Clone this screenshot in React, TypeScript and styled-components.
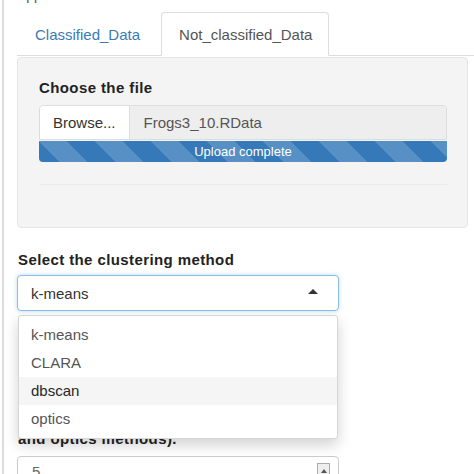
import React from "react";
import styled, { createGlobalStyle } from "styled-components";

const GlobalStyle = createGlobalStyle`
  html, body {
    margin: 0;
    padding: 0;
    background: #fff;
    font-family: "Liberation Sans", Arial, sans-serif;
    color: #333;
    overflow: hidden;
  }
`;

const methods = ["k-means", "CLARA", "dbscan", "optics"];

function App() {
  return (
    <Page>
      <GlobalStyle />
      <TopText>Application</TopText>
      <TabNav>
        <Tab>Classified_Data</Tab>
        <Tab active>Not_classified_Data</Tab>
      </TabNav>
      <Well>
        <Label>Choose the file</Label>
        <InputGroup>
          <BrowseButton>Browse...</BrowseButton>
          <FileName>Frogs3_10.RData</FileName>
        </InputGroup>
        <Progress>Upload complete</Progress>
        <Divider />
      </Well>
      <FormGroup>
        <Label>Select the clustering method</Label>
        <SelectWrap>
          <SelectBox>
            <span>k-means</span>
            <Caret />
          </SelectBox>
          <Dropdown>
            {methods.map((m) => (
              <Option key={m} active={m === "dbscan"}>
                {m}
              </Option>
            ))}
          </Dropdown>
        </SelectWrap>
      </FormGroup>
      <FormGroup spaced>
        <Label>
          Choose the eps parameter (for dbscan
          <br />
          and optics methods).
        </Label>
        <NumberBox>
          <span>5</span>
          <Spinner>
            <SpinUp />
          </Spinner>
        </NumberBox>
      </FormGroup>
    </Page>
  );
}

export default App;

const Page = styled.div`
  position: relative;
  width: 474px;
  height: 474px;
  overflow: hidden;
  box-sizing: border-box;
  margin-left: 2px;
  border-left: 2px solid #dcdcdc;
  padding-left: 13px;
`;

const TopText = styled.div`
  font-size: 14px;
  line-height: 16px;
  margin-top: -13px;
  height: 16px;
  color: #555;
`;

const TabNav = styled.div`
  display: flex;
  gap: 4px;
  margin-top: 9px;
  height: 43px;
  border-bottom: 1px solid #ddd;
  margin-right: -10px;
`;

const Tab = styled.div<{ active?: boolean }>`
  display: flex;
  align-items: center;
  padding: 0 16px 0 17px;
  font-size: 15px;
  color: ${(p) => (p.active ? "#555" : "#3b7bb4")};
  background: ${(p) => (p.active ? "#fff" : "transparent")};
  border: 1px solid ${(p) => (p.active ? "#ddd" : "transparent")};
  border-bottom-color: ${(p) => (p.active ? "#fff" : "transparent")};
  border-radius: 4px 4px 0 0;
  margin-bottom: -1px;
`;

const Well = styled.div`
  margin-top: 1px;
  width: 451px;
  box-sizing: border-box;
  height: 171px;
  background: #f4f4f4;
  border: 1px solid #e6e6e6;
  border-radius: 4px;
  padding: 20px 21px 0 21px;
`;

const Label = styled.div`
  font-size: 15px;
  font-weight: bold;
  letter-spacing: 0.4px;
  line-height: 20px;
  color: #222;
  margin-bottom: 7px;
`;

const InputGroup = styled.div`
  display: flex;
  height: 35px;
  width: 408px;
  box-sizing: border-box;
  border: 1px solid #ddd;
  border-radius: 4px 4px 0 0;
  overflow: hidden;
`;

const BrowseButton = styled.div`
  display: flex;
  align-items: center;
  padding: 0 13px;
  font-size: 15px;
  color: #333;
  background: #fff;
  border-right: 1px solid #ddd;
`;

const FileName = styled.div`
  flex: 1;
  display: flex;
  align-items: center;
  padding: 0 14px;
  font-size: 15px;
  color: #555;
  background: #eee;
`;

const Progress = styled.div`
  margin-top: 1px;
  width: 408px;
  height: 21px;
  line-height: 21px;
  text-align: center;
  font-size: 13px;
  color: #fff;
  border-radius: 0 0 4px 4px;
  background-color: #3579b8;
  background-image: linear-gradient(
    45deg,
    rgba(255, 255, 255, 0.17) 25%,
    transparent 25%,
    transparent 50%,
    rgba(255, 255, 255, 0.17) 50%,
    rgba(255, 255, 255, 0.17) 75%,
    transparent 75%,
    transparent
  );
  background-size: 56px 56px;
`;

const Divider = styled.div`
  margin-top: 22px;
  width: 408px;
  border-top: 1px solid #ebebeb;
`;

const FormGroup = styled.div<{ spaced?: boolean }>`
  margin-top: ${(p) => (p.spaced ? "98px" : "22px")};
  width: 322px;
  & > div:first-child {
    margin-left: 1px;
  }
`;

const SelectWrap = styled.div`
  position: relative;
  margin-top: -2px;
`;

const SelectBox = styled.div`
  display: flex;
  align-items: center;
  justify-content: space-between;
  height: 36px;
  box-sizing: border-box;
  padding: 0 20px 0 13px;
  font-size: 15px;
  color: #333;
  background: #fff;
  border: 1px solid #8dbde6;
  border-radius: 4px;
  box-shadow: 0 0 4px rgba(102, 175, 233, 0.45);
`;

const Caret = styled.span`
  width: 0;
  height: 0;
  border-left: 5px solid transparent;
  border-right: 5px solid transparent;
  border-bottom: 5px solid #333;
  margin-top: -3px;
`;

const Dropdown = styled.div`
  position: absolute;
  z-index: 2;
  top: 40px;
  left: 1px;
  right: 1px;
  padding: 5px 0;
  background: #fff;
  border: 1px solid #d6d6d6;
  border-radius: 3px;
  box-shadow: 0 6px 14px rgba(0, 0, 0, 0.18);
`;

const Option = styled.div<{ active?: boolean }>`
  height: 28px;
  line-height: 28px;
  padding-left: 12px;
  font-size: 15px;
  color: ${(p) => (p.active ? "#262626" : "#555")};
  background: ${(p) => (p.active ? "#f5f5f5" : "#fff")};
`;

const NumberBox = styled.div`
  display: flex;
  justify-content: space-between;
  height: 36px;
  box-sizing: border-box;
  margin-top: 6px;
  padding: 6px 8px 0 14px;
  font-size: 15px;
  color: #666;
  border: 1px solid #ccc;
  border-radius: 4px;
`;

const Spinner = styled.div`
  width: 11px;
  height: 14px;
  border: 1px solid #aaa;
  background: #eee;
  display: flex;
  align-items: center;
  justify-content: center;
`;

const SpinUp = styled.span`
  width: 0;
  height: 0;
  border-left: 3px solid transparent;
  border-right: 3px solid transparent;
  border-bottom: 4px solid #555;
`;
